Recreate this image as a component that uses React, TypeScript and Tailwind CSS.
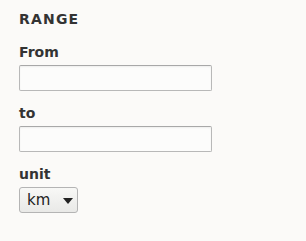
export default function App() {
  return (
    <div
      className="min-h-screen bg-[#fbfaf8] pl-[19px] pt-[11px] text-[#333333]"
      style={{ fontFamily: '"DejaVu Sans", Verdana, sans-serif' }}
    >
      <h2 className="text-[14px] font-bold leading-[17px] tracking-[1.2px]">RANGE</h2>

      <div className="mt-[16px] flex flex-col">
        <label className="text-[14px] font-bold leading-[17px]">From</label>
        <input
          type="text"
          className="mt-[4px] h-[26px] w-[193px] rounded-[2px] border border-[#b8b8b8] border-t-[#a8a8a8] bg-[#fcfcfb] shadow-[inset_0_1px_2px_rgba(0,0,0,0.06)] outline-none"
        />
      </div>

      <div className="mt-[14px] flex flex-col">
        <label className="text-[14px] font-bold leading-[17px]">to</label>
        <input
          type="text"
          className="mt-[4px] h-[26px] w-[193px] rounded-[2px] border border-[#b8b8b8] border-t-[#a8a8a8] bg-[#fcfcfb] shadow-[inset_0_1px_2px_rgba(0,0,0,0.06)] outline-none"
        />
      </div>

      <div className="mt-[14px] flex flex-col">
        <label className="text-[14px] font-bold leading-[17px]">unit</label>
        <div className="mt-[4px] flex h-[26px] w-[59px] items-center justify-between rounded-[3px] border border-[#b4b4b4] bg-gradient-to-b from-[#f8f8f6] to-[#e9e9e7] pl-[7px] pr-[4px]">
          <span className="text-[15px] leading-none text-[#222]">km</span>
          <svg width="10" height="6" viewBox="0 0 10 6" className="mt-[1px]">
            <path d="M0 0 L10 0 L5 6 Z" fill="#222" />
          </svg>
        </div>
      </div>
    </div>
  );
}
